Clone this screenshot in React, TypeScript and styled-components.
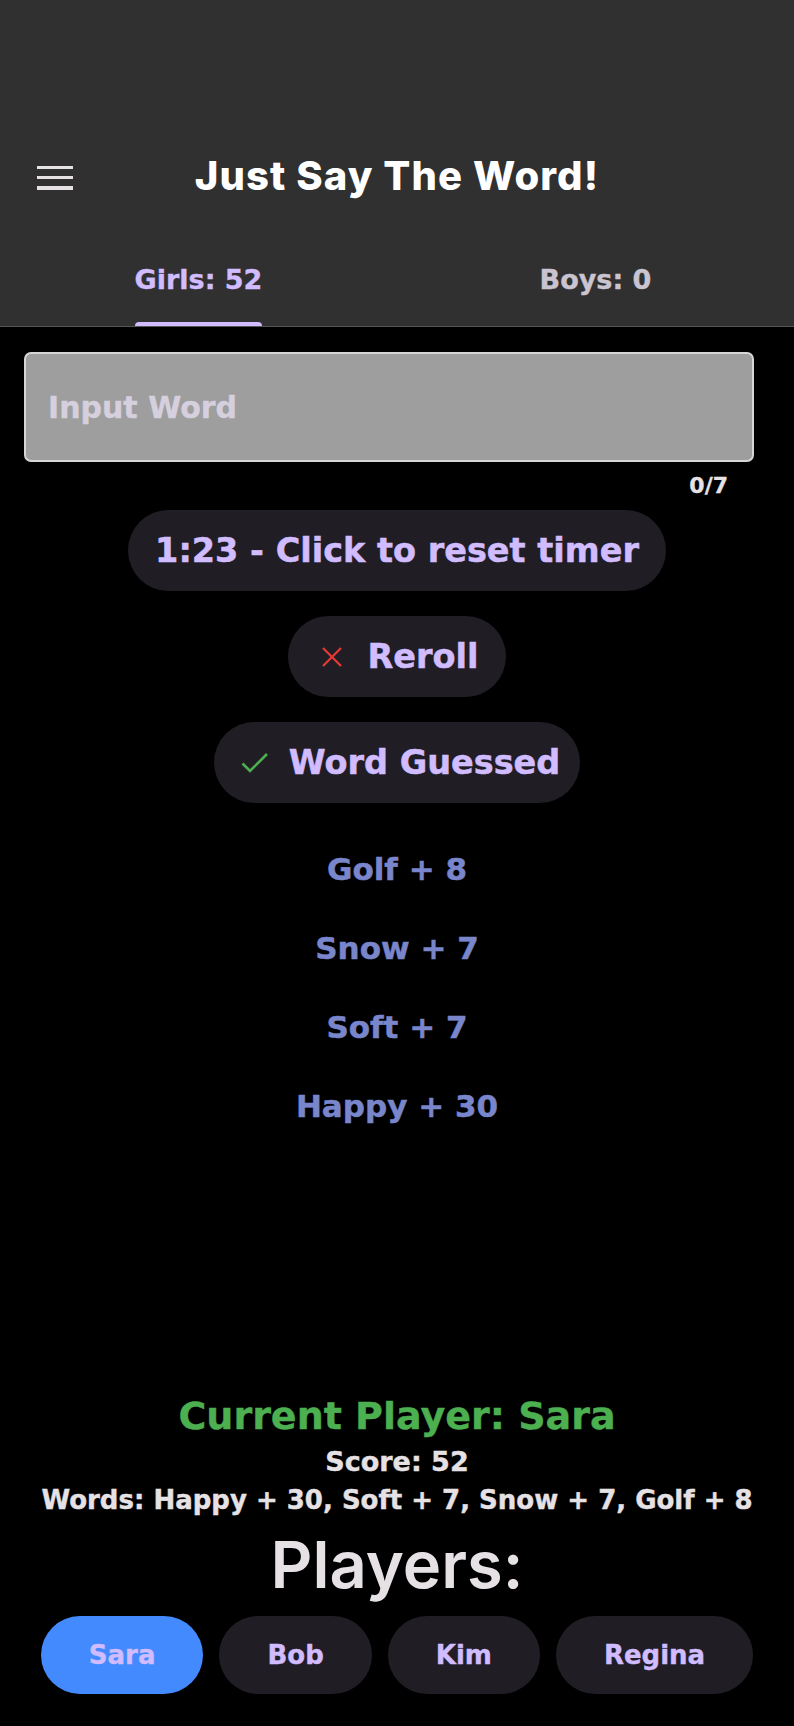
import styled, { createGlobalStyle } from "styled-components";

const GlobalStyle = createGlobalStyle`
  * { box-sizing: border-box; }
  body {
    margin: 0;
    background: #000;
    font-family: "DejaVu Sans", "Liberation Sans", sans-serif;
  }
`;

const Page = styled.div`
  width: 794px;
  min-height: 1726px;
  background: #000;
  display: flex;
  flex-direction: column;
`;

const Header = styled.header`
  background: #303030;
  padding-top: 118px;
  border-bottom: 1px solid #555;
`;

const Toolbar = styled.div`
  height: 115px;
  display: grid;
  grid-template-columns: 1fr auto 1fr;
  align-items: center;
`;

const MenuButton = styled.button`
  justify-self: start;
  margin-left: 37px;
  margin-top: 4px;
  width: 36px;
  height: 24px;
  padding: 0;
  border: none;
  background: none;
  display: flex;
  flex-direction: column;
  justify-content: space-between;
  span {
    display: block;
    height: 3.5px;
    background: #e6e1e5;
  }
`;

const Title = styled.h1`
  margin: 0;
  font-family: Inter, "Liberation Sans", sans-serif;
  font-weight: 800;
  font-size: 40px;
  letter-spacing: 1.1px;
  color: #fff;
`;

const Tabs = styled.nav`
  display: flex;
  height: 93px;
`;

const Tab = styled.div`
  flex: 1;
  display: flex;
  justify-content: center;
`;

const TabInner = styled.div`
  display: flex;
  flex-direction: column;
`;

const TabLabel = styled.div<{ $active?: boolean }>`
  flex: 1;
  display: flex;
  align-items: center;
  padding-top: 4px;
  font-weight: 700;
  font-size: 27px;
  -webkit-text-stroke: 0.4px currentColor;
  color: ${({ $active }) => ($active ? "#d0bcff" : "#cac4d0")};
`;

const Indicator = styled.div<{ $active?: boolean }>`
  height: 4px;
  border-radius: 4px 4px 0 0;
  background: ${({ $active }) => ($active ? "#d0bcff" : "transparent")};
`;

const Main = styled.main`
  display: flex;
  flex-direction: column;
  align-items: center;
`;

const InputWrap = styled.div`
  align-self: stretch;
  padding: 25px 40px 0 24px;
`;

const WordInput = styled.input`
  width: 100%;
  height: 110px;
  border: 2px solid #d6d6d6;
  border-radius: 7px;
  background: #9e9e9e;
  padding: 0 22px;
  font-family: "DejaVu Sans", sans-serif;
  font-weight: 700;
  font-size: 30px;
  color: #fff;
  outline: none;
  -webkit-text-stroke: 0.4px #d6d0de;
  &::placeholder {
    color: #d6d0de;
  }
`;

const Counter = styled.div`
  align-self: stretch;
  text-align: right;
  padding-right: 66px;
  margin-top: 12px;
  line-height: 24px;
  font-weight: 700;
  font-size: 22px;
  -webkit-text-stroke: 0.3px currentColor;
  color: #e6e1e5;
`;

const PillButton = styled.button<{ $mt: number }>`
  margin-top: ${({ $mt }) => $mt}px;
  height: 81px;
  border: none;
  border-radius: 41px;
  background: #201e24;
  display: flex;
  align-items: center;
  gap: 22px;
  padding: 0 27px;
  font-family: "DejaVu Sans", sans-serif;
  font-weight: 700;
  font-size: 33.5px;
  -webkit-text-stroke: 0.5px currentColor;
  color: #d0bcff;
  svg {
    flex: none;
  }
`;

const WordList = styled.ul`
  list-style: none;
  margin: 27px 0 0;
  padding: 0;
  text-align: center;
`;

const WordItem = styled.li`
  line-height: 79px;
  font-weight: 700;
  font-size: 31px;
  -webkit-text-stroke: 0.5px currentColor;
  color: #7986cb;
`;

const Footer = styled.footer`
  margin-top: auto;
  padding-bottom: 32px;
  display: flex;
  flex-direction: column;
  align-items: center;
  -webkit-text-stroke: 0.4px currentColor;
`;

const CurrentPlayer = styled.div`
  line-height: 46px;
  font-weight: 700;
  font-size: 38px;
  color: #4caf50;
`;

const Score = styled.div`
  line-height: 46px;
  font-weight: 700;
  font-size: 27px;
  color: #e6e1e5;
`;

const Words = styled.div`
  line-height: 30px;
  font-weight: 700;
  font-size: 26px;
  color: #e6e1e5;
`;

const PlayersTitle = styled.h2`
  margin: 0;
  line-height: 100px;
  font-family: Inter, "Liberation Sans", sans-serif;
  font-weight: 600;
  font-size: 65px;
  -webkit-text-stroke: 0;
  color: #e6e1e5;
`;

const ChipRow = styled.div`
  margin-top: 1px;
  display: flex;
  gap: 16px;
  justify-content: center;
`;

const Chip = styled.button<{ $active?: boolean }>`
  height: 78px;
  padding: 0 48px;
  border: none;
  border-radius: 39px;
  background: ${({ $active }) => ($active ? "#448aff" : "#201e24")};
  font-family: "DejaVu Sans", sans-serif;
  font-weight: 700;
  font-size: 26px;
  -webkit-text-stroke: 0.4px currentColor;
  color: #d0bcff;
`;

const CloseIcon = () => (
  <svg width="22" height="22" viewBox="0 0 22 22">
    <path d="M2 2 L20 20 M20 2 L2 20" stroke="#e53935" strokeWidth="2.2" fill="none" />
  </svg>
);

const CheckIcon = () => (
  <svg width="28" height="22" viewBox="0 0 28 22">
    <path d="M1.5 11.5 L9 19 L26 2" stroke="#4caf50" strokeWidth="2.6" fill="none" />
  </svg>
);

const words = ["Golf + 8", "Snow + 7", "Soft + 7", "Happy + 30"];
const players = ["Sara", "Bob", "Kim", "Regina"];

export default function App() {
  return (
    <>
      <GlobalStyle />
      <Page>
        <Header>
          <Toolbar>
            <MenuButton aria-label="menu">
              <span />
              <span />
              <span />
            </MenuButton>
            <Title>Just Say The Word!</Title>
            <div />
          </Toolbar>
          <Tabs>
            <Tab>
              <TabInner>
                <TabLabel $active>Girls: 52</TabLabel>
                <Indicator $active />
              </TabInner>
            </Tab>
            <Tab>
              <TabInner>
                <TabLabel>Boys: 0</TabLabel>
                <Indicator />
              </TabInner>
            </Tab>
          </Tabs>
        </Header>
        <Main>
          <InputWrap>
            <WordInput placeholder="Input Word" />
          </InputWrap>
          <Counter>0/7</Counter>
          <PillButton $mt={12}>1:23 - Click to reset timer</PillButton>
          <PillButton $mt={25} style={{ paddingLeft: 33, gap: 24 }}>
            <CloseIcon />
            Reroll
          </PillButton>
          <PillButton $mt={25} style={{ paddingLeft: 27, paddingRight: 20, gap: 20 }}>
            <CheckIcon />
            Word Guessed
          </PillButton>
          <WordList>
            {words.map((w) => (
              <WordItem key={w}>{w}</WordItem>
            ))}
          </WordList>
        </Main>
        <Footer>
          <CurrentPlayer>Current Player: Sara</CurrentPlayer>
          <Score>Score: 52</Score>
          <Words>Words: Happy + 30, Soft + 7, Snow + 7, Golf + 8</Words>
          <PlayersTitle>Players:</PlayersTitle>
          <ChipRow>
            {players.map((p, i) => (
              <Chip key={p} $active={i === 0}>
                {p}
              </Chip>
            ))}
          </ChipRow>
        </Footer>
      </Page>
    </>
  );
}
